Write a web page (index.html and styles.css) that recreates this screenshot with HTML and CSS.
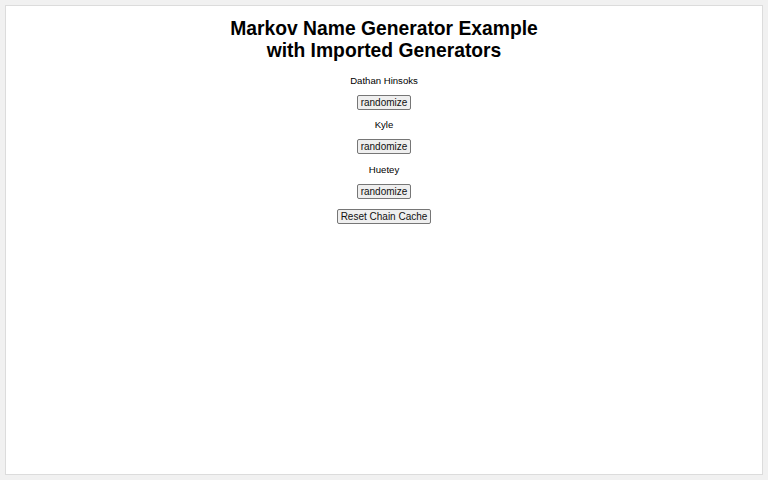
FILE: index.html
```html
<!DOCTYPE html>
<html lang="en">
<head>
    <meta charset="UTF-8">
    <meta name="viewport" content="width=device-width, initial-scale=1.0">
    <title>Markov Name Generator Example</title>
    <link rel="stylesheet" href="styles.css">
</head>
<body>
    <div class="frame">
        <h1>Markov Name Generator Example<br>with Imported Generators</h1>

        <div class="generator">
            <p class="name">Dathan Hinsoks</p>
            <button>randomize</button>
        </div>
        <div class="generator">
            <p class="name">Kyle</p>
            <button>randomize</button>
        </div>
        <div class="generator">
            <p class="name">Huetey</p>
            <button>randomize</button>
        </div>

        <button class="reset">Reset Chain Cache</button>
    </div>
</body>
</html>
```

FILE: styles.css
```css
body {
    margin: 0;
    padding: 5px;
    background-color: #f1f1f1;
    font-family: "Liberation Sans", Arial, sans-serif;
}

.frame {
    height: 468px;
    background: #fff;
    border: 1px solid #dcdcdc;
    display: flex;
    flex-direction: column;
    align-items: center;
}

h1 {
    margin: 12px 0 13px;
    font-size: 19.3px;
    line-height: 22px;
    text-align: center;
    color: #000;
}

.generator {
    display: flex;
    flex-direction: column;
    align-items: center;
}

.name {
    margin: 0 0 8px;
    font-size: 9.6px;
    line-height: 12px;
}

button {
    font-family: "Liberation Sans", Arial, sans-serif;
    font-size: 10px;
    line-height: 11px;
    padding: 1px 3px;
    margin-bottom: 9.3px;
    border: 1px solid #767676;
    border-radius: 2px;
    background: #efefef;
    color: #111;
}

.reset {
    margin-top: 1.5px;
}
```
